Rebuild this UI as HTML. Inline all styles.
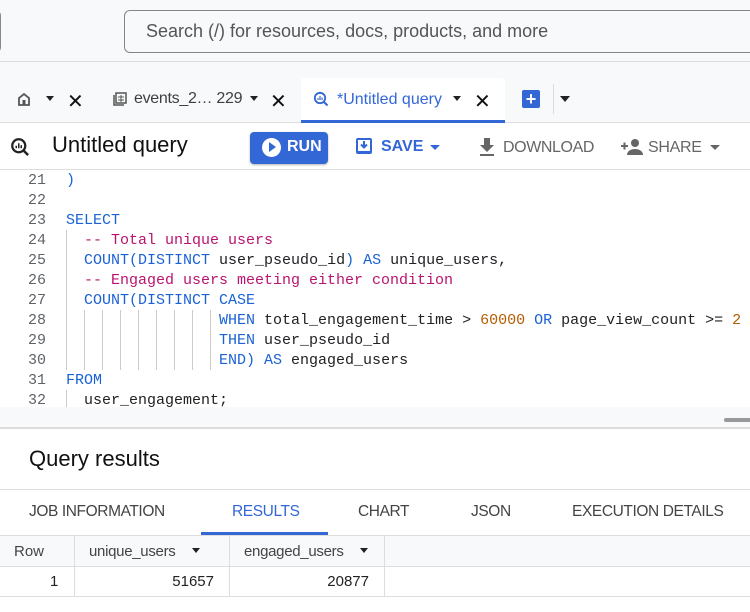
<!DOCTYPE html>
<html><head><style>
*{margin:0;padding:0;box-sizing:border-box}
body{width:750px;height:612px;overflow:hidden;background:#fff;font-family:"Liberation Sans",sans-serif;position:relative;color:#202124}
.a{position:absolute}
.mono{font-family:"Liberation Mono",monospace;font-size:15px}
.ln{position:absolute;left:0;width:46px;text-align:right;color:#5f6368}
.cd{position:absolute;left:66px;white-space:pre;color:#202124}
.k{color:#1a62d6}.c{color:#b8146f}.n{color:#b35c00}
.g{position:absolute;width:1px;background:#ccc}
.tab{position:absolute;top:503px;font-size:15.5px;color:#444;letter-spacing:-.1px}
</style></head><body>
<div class="a" style="left:0;top:0;width:750px;height:61px;background:#f8f9fa"></div>
<div class="a" style="left:-10px;top:10px;width:11px;height:43px;border:1px solid #888;border-radius:6px"></div>
<div class="a" style="left:124px;top:10px;width:640px;height:43px;border:1px solid #80868b;border-radius:6px;background:#f8f9fa"></div>
<div class="a" style="left:146px;top:21px;font-size:18px;color:#555">Search (/) for resources, docs, products, and more</div>
<div class="a" style="left:0;top:61px;width:750px;height:1px;background:#ddd"></div>
<div class="a" style="left:0;top:62px;width:750px;height:61px;background:#f8f9fa"></div>
<div class="a" style="left:0;top:122px;width:750px;height:1px;background:#ddd"></div>
<svg class="a" style="left:17px;top:92px" width="14" height="14" viewBox="0 0 14 14"><path d="M2 13V6L7 2l5 4v7z" fill="none" stroke="#555" stroke-width="1.8"/><rect x="5.5" y="8" width="3" height="5" fill="#555"/></svg>
<div class="a" style="left:46px;top:96px;border:4px solid transparent;border-top:5px solid #222"></div>
<div class="a" style="left:67px;top:89px;font-size:20px;color:#111">✕</div>
<svg class="a" style="left:113px;top:92px" width="14" height="14" viewBox="0 0 14 14"><rect x="3" y="1" width="10" height="10" fill="none" stroke="#555" stroke-width="1.5"/><path d="M1 3v10h10" fill="none" stroke="#555" stroke-width="1.5"/><path d="M5 5h6M5 8h6M8 3v7" stroke="#555"/></svg>
<div class="a" style="left:134px;top:90px;font-size:16px;color:#3c4043;letter-spacing:-.3px">events_2… 229</div>
<div class="a" style="left:250px;top:96px;border:4px solid transparent;border-top:5px solid #222"></div>
<div class="a" style="left:270px;top:89px;font-size:20px;color:#111">✕</div>
<div class="a" style="left:301px;top:78px;width:204px;height:45px;background:#fff;border-radius:4px 4px 0 0;border-bottom:3px solid #3367d6"></div>
<svg class="a" style="left:313px;top:91px" width="16" height="16" viewBox="0 0 16 16"><circle cx="7" cy="7" r="5.2" fill="none" stroke="#3367d6" stroke-width="1.8"/><path d="M11 11l3.5 3.5" stroke="#3367d6" stroke-width="2"/><path d="M5 9V7M7 9V5M9 9V6.5" stroke="#3367d6" stroke-width="1.2"/></svg>
<div class="a" style="left:337px;top:91px;font-size:16px;color:#3367d6">*Untitled query</div>
<div class="a" style="left:453px;top:96px;border:4px solid transparent;border-top:5px solid #222"></div>
<div class="a" style="left:474px;top:89px;font-size:20px;color:#111">✕</div>
<div class="a" style="left:522px;top:90px;width:18px;height:18px;background:#3367d6;border-radius:2px;color:#fff;font-size:18px;font-weight:bold;line-height:18px;text-align:center">+</div>
<div class="a" style="left:553px;top:84px;width:1px;height:30px;background:#ddd"></div>
<div class="a" style="left:560px;top:96px;border:5px solid transparent;border-top:6px solid #222"></div>
<svg class="a" style="left:10px;top:137px" width="20" height="20" viewBox="0 0 16 16"><circle cx="7" cy="7" r="5.2" fill="none" stroke="#222" stroke-width="1.8"/><path d="M11 11l3.5 3.5" stroke="#222" stroke-width="2"/><path d="M5 9V7M7 9V5M9 9V6.5" stroke="#222" stroke-width="1.2"/></svg>
<div class="a" style="left:52px;top:132px;font-size:22px;color:#111">Untitled query</div>
<div class="a" style="left:250px;top:132px;width:78px;height:32px;background:#3367d6;border-radius:4px;box-shadow:0 1px 2px rgba(0,0,0,.3)"></div>
<div class="a" style="left:262px;top:138px;width:19px;height:19px;border-radius:50%;background:#fff"></div>
<div class="a" style="left:269px;top:142px;border:5.5px solid transparent;border-left:7px solid #3367d6;border-right:0"></div>
<div class="a" style="left:287px;top:138px;font-size:16px;color:#fff;font-weight:bold">RUN</div>
<svg class="a" style="left:355px;top:137px" width="18" height="18" viewBox="0 0 18 18"><rect x="1" y="1" width="16" height="16" rx="2" fill="#3367d6"/><rect x="3" y="3" width="12" height="11" fill="#fff"/><path d="M9 4v6M6 7.5l3 3 3-3" stroke="#3367d6" stroke-width="2" fill="none"/></svg>
<div class="a" style="left:381px;top:138px;font-size:16px;color:#3367d6;font-weight:bold">SAVE</div>
<div class="a" style="left:430px;top:145px;border:5px solid transparent;border-top:5px solid #3367d6"></div>
<svg class="a" style="left:478px;top:137px" width="18" height="20" viewBox="0 0 18 20"><path d="M6 1h6v7h4l-7 7-7-7h4z" fill="#666"/><rect x="2" y="17" width="14" height="2" fill="#666"/></svg>
<div class="a" style="left:503px;top:139px;font-size:16px;color:#666;letter-spacing:-.4px">DOWNLOAD</div>
<svg class="a" style="left:620px;top:138px" width="24" height="18" viewBox="0 0 24 18"><path d="M1 8h7M4.5 4.5v7" stroke="#666" stroke-width="2"/><circle cx="15" cy="5" r="4" fill="#666"/><path d="M7 17c0-4 4-6 8-6s8 2 8 6z" fill="#666"/></svg>
<div class="a" style="left:648px;top:139px;font-size:16px;color:#666;letter-spacing:-.3px">SHARE</div>
<div class="a" style="left:710px;top:145px;border:5px solid transparent;border-top:5px solid #666"></div>
<div class="a" style="left:0;top:169px;width:750px;height:1px;background:#ddd"></div>
<div class="mono">
<div class="ln" style="top:172px">21</div><div class="cd k" style="top:172px">)</div>
<div class="ln" style="top:192px">22</div>
<div class="ln" style="top:212px">23</div><div class="cd k" style="top:212px">SELECT</div>
<div class="ln" style="top:232px">24</div><div class="cd c" style="top:232px">  -- Total unique users</div>
<div class="ln" style="top:252px">25</div><div class="cd" style="top:252px">  <span class="k">COUNT(DISTINCT</span> user_pseudo_id<span class="k">) AS</span> unique_users,</div>
<div class="ln" style="top:272px">26</div><div class="cd c" style="top:272px">  -- Engaged users meeting either condition</div>
<div class="ln" style="top:292px">27</div><div class="cd k" style="top:292px">  COUNT(DISTINCT CASE</div>
<div class="ln" style="top:312px">28</div><div class="cd" style="top:312px">                 <span class="k">WHEN</span> total_engagement_time &gt; <span class="n">60000</span> <span class="k">OR</span> page_view_count &gt;= <span class="n">2</span></div>
<div class="ln" style="top:332px">29</div><div class="cd" style="top:332px">                 <span class="k">THEN</span> user_pseudo_id</div>
<div class="ln" style="top:352px">30</div><div class="cd" style="top:352px">                 <span class="k">END) AS</span> engaged_users</div>
<div class="ln" style="top:372px">31</div><div class="cd k" style="top:372px">FROM</div>
<div class="ln" style="top:392px">32</div><div class="cd" style="top:392px">  user_engagement;</div>
</div>
<div class="g" style="left:66px;top:230px;height:140px"></div>
<div class="g" style="left:84px;top:310px;height:60px"></div>
<div class="g" style="left:102px;top:310px;height:60px"></div>
<div class="g" style="left:120px;top:310px;height:60px"></div>
<div class="g" style="left:138px;top:310px;height:60px"></div>
<div class="g" style="left:156px;top:310px;height:60px"></div>
<div class="g" style="left:174px;top:310px;height:60px"></div>
<div class="g" style="left:192px;top:310px;height:60px"></div>
<div class="g" style="left:210px;top:310px;height:60px"></div>
<div class="g" style="left:66px;top:390px;height:17px"></div>
<div class="a" style="left:0;top:407px;width:750px;height:20px;background:#f8f9fa"></div>
<div class="a" style="left:724px;top:418px;width:30px;height:4px;background:#999;border-radius:2px"></div>
<div class="a" style="left:0;top:427px;width:750px;height:2px;background:#ddd"></div>
<div class="a" style="left:29px;top:446px;font-size:22px;color:#111">Query results</div>
<div class="a" style="left:0;top:489px;width:750px;height:1px;background:#ddd"></div>
<div class="tab" style="left:29px;letter-spacing:-.4px">JOB INFORMATION</div>
<div class="tab" style="left:232px;color:#3367d6;letter-spacing:-.4px">RESULTS</div>
<div class="tab" style="left:358px;letter-spacing:-.4px">CHART</div>
<div class="tab" style="left:471px;letter-spacing:-.4px">JSON</div>
<div class="tab" style="left:572px;letter-spacing:-.4px">EXECUTION DETAILS</div>
<div class="a" style="left:201px;top:532px;width:127px;height:3px;background:#3367d6"></div>
<div class="a" style="left:0;top:535px;width:750px;height:1px;background:#ddd"></div>
<div class="a" style="left:0;top:536px;width:750px;height:31px;background:#f8f9fa;border-bottom:1px solid #ddd"></div>
<div class="a" style="left:74px;top:536px;width:1px;height:60px;background:#ddd"></div>
<div class="a" style="left:229px;top:536px;width:1px;height:60px;background:#ddd"></div>
<div class="a" style="left:384px;top:536px;width:1px;height:60px;background:#ddd"></div>
<div class="a" style="left:14px;top:543px;font-size:15px;color:#444">Row</div>
<div class="a" style="left:89px;top:543px;font-size:15px;color:#444;letter-spacing:-.3px">unique_users</div>
<div class="a" style="left:192px;top:548px;border:4px solid transparent;border-top:5px solid #222"></div>
<div class="a" style="left:244px;top:543px;font-size:15px;color:#444;letter-spacing:-.3px">engaged_users</div>
<div class="a" style="left:360px;top:548px;border:4px solid transparent;border-top:5px solid #222"></div>
<div class="a" style="left:50px;top:573px;font-size:15px;color:#222">1</div>
<div class="a" style="left:140px;top:573px;width:74px;text-align:right;font-size:15px;color:#222">51657</div>
<div class="a" style="left:295px;top:573px;width:74px;text-align:right;font-size:15px;color:#222">20877</div>
<div class="a" style="left:0;top:596px;width:750px;height:1px;background:#ddd"></div>
</body></html>
